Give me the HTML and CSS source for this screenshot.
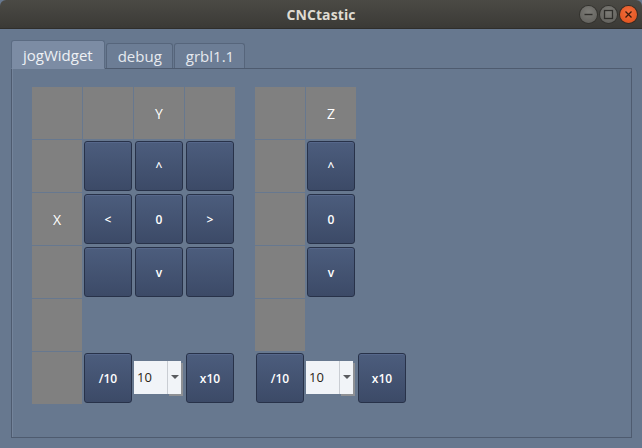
FILE: index.html
```html
<!DOCTYPE html>
<html>
<head>
<meta charset="utf-8">
<title>CNCtastic</title>
<link rel="stylesheet" href="styles.css">
</head>
<body>
<div class="window">
  <div class="titlebar">
    <div class="spacer"></div>
    <div class="title">CNCtastic</div>
    <div class="controls">
      <span class="wbtn gray"><svg width="17" height="17" viewBox="0 0 17 17"><line x1="4.5" y1="8.5" x2="12.5" y2="8.5" stroke="#2f2e2b" stroke-width="1.4"/></svg></span>
      <span class="wbtn gray"><svg width="17" height="17" viewBox="0 0 17 17"><rect x="4.5" y="4.5" width="8" height="8" fill="none" stroke="#2f2e2b" stroke-width="1.3"/></svg></span>
      <span class="wbtn close"><svg width="17" height="17" viewBox="0 0 17 17"><path d="M5.5 5.5 L11.5 11.5 M11.5 5.5 L5.5 11.5" stroke="#3a1a0c" stroke-width="1.3"/></svg></span>
    </div>
  </div>
  <div class="content">
    <div class="tabs">
      <div class="tab active">jogWidget</div>
      <div class="tab">debug</div>
      <div class="tab">grbl1.1</div>
    </div>
    <div class="pane">
      <div class="grid grid-xy">
        <div class="cell"></div><div class="cell"></div><div class="cell">Y</div><div class="cell"></div>
        <div class="cell"></div><div class="btn"></div><div class="btn">^</div><div class="btn"></div>
        <div class="cell">X</div><div class="btn">&lt;</div><div class="btn">0</div><div class="btn">&gt;</div>
        <div class="cell"></div><div class="btn"></div><div class="btn">v</div><div class="btn"></div>
        <div class="cell"></div><div class="empty"></div><div class="empty"></div><div class="empty"></div>
        <div class="cell"></div><div class="btn">/10</div>
        <div class="spin"><span class="spin-val">10</span><span class="spin-arrow"><i></i></span></div>
        <div class="btn">x10</div>
      </div>
      <div class="grid grid-z">
        <div class="cell"></div><div class="cell">Z</div><div class="empty"></div>
        <div class="cell"></div><div class="btn">^</div><div class="empty"></div>
        <div class="cell"></div><div class="btn">0</div><div class="empty"></div>
        <div class="cell"></div><div class="btn">v</div><div class="empty"></div>
        <div class="cell"></div><div class="empty"></div><div class="empty"></div>
        <div class="btn">/10</div>
        <div class="spin"><span class="spin-val">10</span><span class="spin-arrow"><i></i></span></div>
        <div class="btn">x10</div>
      </div>
    </div>
  </div>
</div>
</body>
</html>
```

FILE: styles.css
```css
* { box-sizing: border-box; }
html, body { margin: 0; padding: 0; }
body {
  width: 642px;
  height: 448px;
  overflow: hidden;
  background: #67788f;
  font-family: "Open Sans", "DejaVu Sans", sans-serif;
}
.window {
  width: 642px;
  height: 448px;
  background: #67788f;
}
.titlebar {
  height: 29px;
  display: grid;
  grid-template-columns: 1fr auto 1fr;
  align-items: center;
  background: linear-gradient(#4b4a45, #3b3a36);
  border-radius: 6px 6px 0 0;
  border-bottom: 1px solid #2f2e2b;
}
.title {
  color: #dfdbd2;
  font-weight: bold;
  font-size: 14px;
  letter-spacing: 0.1px;
  padding-top: 1px;
}
.controls {
  display: flex;
  justify-content: flex-end;
  gap: 3px;
  padding-right: 5px;
  padding-top: 1px;
}
.wbtn {
  width: 17px;
  height: 17px;
  border-radius: 50%;
  display: flex;
}
.wbtn.gray {
  background: radial-gradient(circle at 50% 35%, #7d7c77, #5d5c58);
  box-shadow: 0 0 0 1px #34332f;
}
.wbtn.close {
  background: radial-gradient(circle at 50% 35%, #f26d3d, #de4f19);
  box-shadow: 0 0 0 1px #3a2a20;
}
.content {
  padding: 11px 10px 0 11px;
}
.tabs {
  display: flex;
  align-items: flex-end;
  height: 28px;
  gap: 1px;
}
.tab {
  height: 25px;
  padding: 0 10px 0 11px;
  display: flex;
  align-items: center;
  font-size: 15px;
  color: #e6e9ee;
  background: #6c7d95;
  border: 1px solid #56657b;
  border-bottom: none;
  border-radius: 3px 3px 0 0;
}
.tab.active {
  background: #7c8ca4;
  border-color: #5b6b82;
  color: #eef1f5;
  padding: 0 11px;
  position: relative;
  z-index: 1;
  margin-bottom: -1px;
  height: 29px;
  border-bottom: 1px solid #7c8ca4;
}
.pane {
  height: 370px;
  border: 1px solid #4e5b6f;
  box-shadow: inset 1px 0 0 #74849b;
  padding: 18px 0 0 20px;
  display: flex;
  align-items: flex-start;
  gap: 20px;
}
.grid {
  display: grid;
  grid-auto-rows: 52px;
  row-gap: 1px;
  column-gap: 1px;
}
.grid-xy { grid-template-columns: repeat(4, 50px); }
.grid-z { grid-template-columns: repeat(3, 50px); }
.cell {
  background: #808080;
  color: #ffffff;
  font-size: 14px;
  display: flex;
  align-items: center;
  justify-content: center;
}
.btn {
  margin: 1px;
  border: 1px solid #283249;
  border-radius: 3px;
  background: linear-gradient(#4c5d7d, #3c4a67);
  box-shadow: inset 0 1px 0 #56678a;
  color: #ffffff;
  font-size: 12px;
  font-weight: 600;
  display: flex;
  align-items: center;
  justify-content: center;
}
.spin {
  align-self: center;
  width: 49px;
  height: 35px;
  display: flex;
  padding: 0 2px 2px 0;
}
.spin-val {
  flex: 1;
  background: #f1f4f8;
  color: #2b2416;
  font-size: 13px;
  display: flex;
  align-items: center;
  padding-left: 3px;
}
.spin-arrow {
  width: 14px;
  background: #f1f4f8;
  border-left: 1px solid #c9cdd3;
  display: flex;
  align-items: center;
  justify-content: center;
  box-shadow: 2px 2px 0 #8e9094;
}
.spin-arrow i {
  width: 0;
  height: 0;
  border-left: 4px solid transparent;
  border-right: 4px solid transparent;
  border-top: 4px solid #5a5c60;
}
```
